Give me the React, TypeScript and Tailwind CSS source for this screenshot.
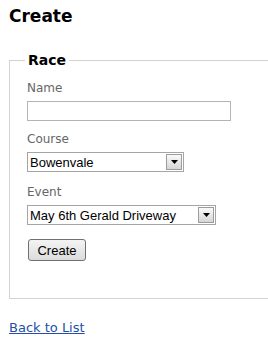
import React from "react";

function Caret() {
  return (
    <span className="absolute right-[1px] top-[1px] bottom-[1px] w-[16px] border border-[#9c9c9c] bg-gradient-to-b from-[#fafafa] to-[#d6d6d6] flex items-center justify-center">
      <svg width="7" height="4" viewBox="0 0 7 4">
        <path d="M0 0h7L3.5 4z" fill="#000" />
      </svg>
    </span>
  );
}

function FakeSelect({ value, width }: { value: string; width: string }) {
  return (
    <div
      className={`relative h-[20px] border border-[#a5a5a5] bg-white ${width}`}
      style={{ fontFamily: '"Liberation Sans", Arial, sans-serif' }}
    >
      <span className="absolute left-[2px] top-[2px] text-[13px] leading-[15px] text-black whitespace-nowrap">
        {value}
      </span>
      <Caret />
    </div>
  );
}

export default function App() {
  return (
    <div
      className="w-[268px] h-[340px] overflow-hidden bg-white"
      style={{ fontFamily: '"DejaVu Sans", Verdana, sans-serif' }}
    >
      <h2 className="pt-[6px] pl-[9px] text-[17px] leading-[20px] font-bold text-black">
        Create
      </h2>
      <fieldset className="mt-[26px] ml-[9px] w-[300px] h-[247px] border border-[#d3d3d3] pl-[17px] pr-[10px] pb-0 pt-0">
        <legend className="ml-[-2px] px-[3px] text-[14px] leading-[17px] font-bold text-black">
          Race
        </legend>
        <div className="mt-[12px] text-[12px] leading-[15px] text-[#666]">Name</div>
        <div className="mt-[5px] w-[204px] h-[20px] border border-[#b4b4b4] bg-white" />
        <div className="mt-[11px] text-[12px] leading-[15px] text-[#666]">Course</div>
        <div className="mt-[5px]">
          <FakeSelect value="Bowenvale" width="w-[157px]" />
        </div>
        <div className="mt-[13px] text-[12px] leading-[15px] text-[#666]">Event</div>
        <div className="mt-[5px]">
          <FakeSelect value="May 6th Gerald Driveway" width="w-[189px]" />
        </div>
        <button
          className="mt-[14px] ml-[1px] w-[58px] h-[22px] rounded-[3px] border border-[#707070] bg-gradient-to-b from-[#f4f4f4] to-[#dcdcdc] text-[13px] leading-[15px] text-black"
          style={{ fontFamily: '"Liberation Sans", Arial, sans-serif' }}
        >
          Create
        </button>
      </fieldset>
      <div className="mt-[16px] pl-[9px]">
        <a href="#" className="text-[13px] leading-[16px] text-[#2350a8] underline">
          Back to List
        </a>
      </div>
    </div>
  );
}
